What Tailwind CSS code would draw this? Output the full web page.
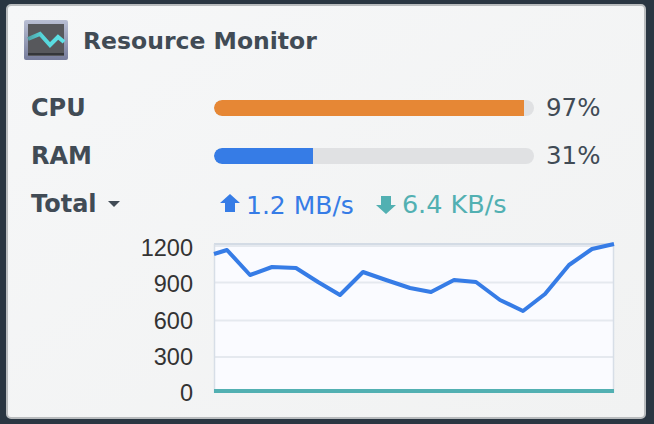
<!DOCTYPE html>
<html lang="en">
<head>
    <meta charset="UTF-8">
    <title>Resource Monitor</title>
    <script src="https://cdn.jsdelivr.net/npm/@tailwindcss/browser@4"></script>
</head>
<body class="w-[654px] h-[424px] overflow-hidden bg-[#2a3642] pt-[4px] pl-[6px] font-['DejaVu_Sans',sans-serif]">
    <div class="w-[640px] h-[415px] rounded-[5px] border-2 border-[#b9bcbe] bg-gradient-to-br from-[#f6f7f8] to-[#f1f2f2] pl-[16px] pr-[20px]">
        <!-- header -->
        <div class="flex items-center h-[40px] mt-[14px]">
            <svg width="44" height="40" viewBox="0 0 44 40" class="shrink-0">
                <defs>
                    <linearGradient id="frame" x1="0" y1="0" x2="0" y2="1">
                        <stop offset="0" stop-color="#b9bfd4"/>
                        <stop offset="1" stop-color="#767c9b"/>
                    </linearGradient>
                    <linearGradient id="wave" x1="0" y1="0" x2="1" y2="0">
                        <stop offset="0" stop-color="#4f9ea3"/>
                        <stop offset="0.4" stop-color="#55d5da"/>
                        <stop offset="1" stop-color="#5fe3e8"/>
                    </linearGradient>
                </defs>
                <rect width="44" height="40" rx="2" fill="url(#frame)"/>
                <rect x="4" y="4" width="36" height="32" fill="#57585c"/>
                <rect x="4" y="33" width="36" height="2" fill="#34363a"/>
                <path d="M4 19L16 14L26 25L34 17L40 22" fill="none" stroke="url(#wave)" stroke-width="4"/>
            </svg>
            <h1 class="ml-[15px] mt-[4px] text-[23.5px] font-bold text-[#414b55] leading-none whitespace-nowrap">Resource Monitor</h1>
        </div>

        <!-- usage rows -->
        <div class="flex items-center h-[24px] mt-[36px] pl-[7px]">
            <span class="w-[183px] text-[24px] font-bold text-[#414b55] leading-none">CPU</span>
            <div class="w-[320px] h-[16px] rounded-full bg-[#e0e1e3] overflow-hidden">
                <div class="w-[310px] h-full rounded-l-full bg-[#e68735]"></div>
            </div>
            <span class="ml-[12px] text-[24.5px] text-[#414b55] leading-none">97%</span>
        </div>
        <div class="flex items-center h-[24px] mt-[24px] pl-[7px]">
            <span class="w-[183px] text-[24px] font-bold text-[#414b55] leading-none">RAM</span>
            <div class="w-[320px] h-[16px] rounded-full bg-[#e0e1e3] overflow-hidden">
                <div class="w-[99px] h-full rounded-l-full bg-[#367ce6]"></div>
            </div>
            <span class="ml-[12px] text-[24.5px] text-[#414b55] leading-none">31%</span>
        </div>

        <!-- network row -->
        <div class="flex items-center h-[24px] mt-[24px] pl-[7px]">
            <div class="w-[183px] flex items-center">
                <span class="text-[24px] font-bold text-[#414b55] leading-none">Total</span>
                <svg width="12" height="6" viewBox="0 0 12 6" class="ml-[11px]"><path d="M0 0H12L6 6Z" fill="#414b55"/></svg>
            </div>
            <svg width="20" height="18" viewBox="0 0 20 18" class="ml-[6px] mb-[2px]"><path d="M10 0L20 9H15V18H5V9H0Z" fill="#367ce6"/></svg>
            <span class="ml-[6px] mt-[2px] text-[25px] text-[#367ce6] leading-none whitespace-nowrap">1.2 MB/s</span>
            <svg width="20" height="18" viewBox="0 0 20 18" class="ml-[22px] mt-[2px]"><path d="M5 0H15V9H20L10 18L0 9H5Z" fill="#52b0b2"/></svg>
            <span class="ml-[6px] mt-[2px] text-[25.5px] text-[#52b0b2] leading-none whitespace-nowrap">6.4 KB/s</span>
        </div>

        <!-- chart -->
        <div class="flex mt-[19px]">
            <div class="w-[169px] h-[171px] flex flex-col justify-between items-end font-['Liberation_Sans',sans-serif] text-[23.5px] leading-[26px] text-[#333333]">
                <span>1200</span>
                <span>900</span>
                <span>600</span>
                <span>300</span>
                <span>0</span>
            </div>
            <svg width="402" height="152" viewBox="213 242 402 152" class="ml-[20px] mt-[7px]">
                <rect x="214" y="244" width="400" height="149" fill="#fafbff"/>
                <path d="M214 282.500H614M214 320.500H614M214 357H614" stroke="#e5e9ef" stroke-width="2" fill="none"/>
                <path d="M214 245.500H614" stroke="#e5e9ef" stroke-width="3" fill="none"/>
                <path d="M214 244H614" stroke="#d3dbe5" stroke-width="2" fill="none"/>
                <path d="M214.500 244V393M613.500 244V393" stroke="#d7dee7" stroke-width="1.500" fill="none"/>
                <path d="M214 391H614" stroke="#52b0b2" stroke-width="4" fill="none"/>
                <path d="M214 254L227 250L250 275L272 267L296 268L318 282L340 295L363 272L386 280L410 288L431 292L454 280L476 282L500 300L523 311L545 294L569 265L592 249L614 244" fill="none" stroke="#367ce6" stroke-width="4" stroke-linejoin="round"/>
            </svg>
        </div>
    </div>
</body>
</html>
